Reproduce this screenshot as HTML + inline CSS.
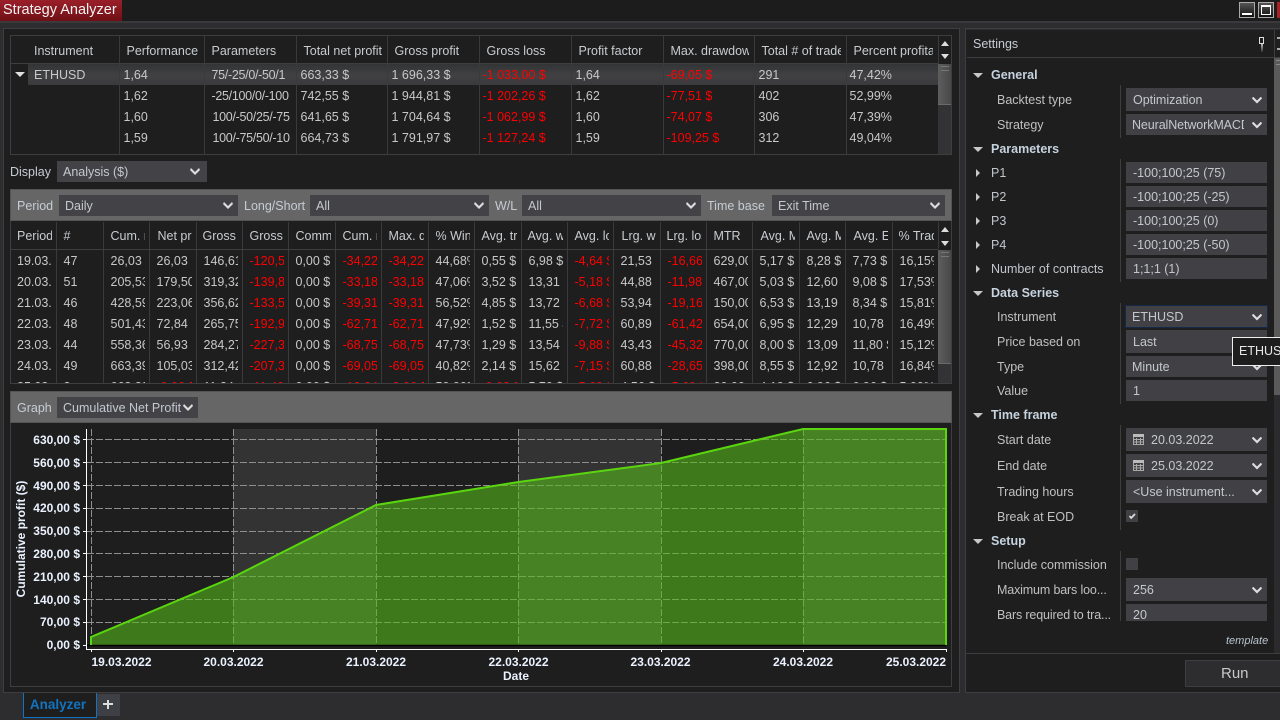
<!DOCTYPE html>
<html><head><meta charset="utf-8"><title>Strategy Analyzer</title>
<style>
*{box-sizing:border-box}
html,body{margin:0;padding:0;width:1280px;height:720px;overflow:hidden;background:#2d2d30;font-family:"Liberation Sans",sans-serif;font-size:12.5px;color:#c8c8c8}
div,span,table{position:absolute}
td div,td span{position:static}
.t{white-space:nowrap;line-height:15px}
table{border-collapse:collapse;table-layout:fixed;border-spacing:0}
td{padding:0;height:21px;overflow:hidden}
td div{overflow:hidden;white-space:nowrap;height:21px;line-height:23px}
.r{color:#f00}
.sel{background:#434347;color:#c4c8d0;height:21px;line-height:23px;padding-left:6px;white-space:nowrap}
.sel:after,.ctl.dd:after{content:"";position:absolute;right:5px;top:7px;width:10px;height:7px;background:#ddd;clip-path:polygon(1px 0,5px 4px,9px 0,10px 2px,5px 7px,0 2px)}
.sel.d:after{right:7px}
.bar{left:10px;width:942px;height:32px;background:#666;border:1px solid #555}
.lbl{color:#c6ccd4;white-space:nowrap;line-height:15px;margin-top:1px}
.sec{left:991px;font-weight:bold;color:#c6d3df;white-space:nowrap;line-height:15px;margin-top:1px}
.lab{left:997px;color:#c0c0c0;white-space:nowrap;line-height:15px;margin-top:1px}
.par{left:991px;color:#c0c6cc;white-space:nowrap;line-height:15px;margin-top:1px}
.down{left:973px;width:0;height:0;border-left:5px solid transparent;border-right:5px solid transparent;border-top:5px solid #c8c8c8}
.rt{left:976px;width:0;height:0;border-top:4px solid transparent;border-bottom:4px solid transparent;border-left:4px solid #c8c8c8;margin-top:1px}
.ctl{left:1126px;width:141px;background:#404045;color:#c4c8ce;padding-left:6px;white-space:nowrap;line-height:23px;overflow:hidden}
.ctl.dd:after{top:calc(50% - 3px)}
.vs{left:1120px;width:1px;background:#3e3e3e}
.cal{position:absolute;left:7px;top:6px}
.h1 td div{height:28px;line-height:30px;padding-left:7px;color:#c8ccd0}
.h2 td div{height:27px;line-height:29px;padding-left:7px;margin-right:4px;color:#c8ccd0}
.bd td{border-right:1px solid #3a3a3c}
.ta td div{padding-left:4px}
.ta td:nth-child(1) div{padding-left:23px}
.ta td:nth-child(3) div{padding-left:7px;margin-right:5px;letter-spacing:-.3px}
.ta td:nth-child(6) div,.ta td:nth-child(8) div,.ta td:nth-child(10) div{padding-left:3px}
.tb td div{padding-left:7px;margin-right:4px}
.tb td:first-child div{padding-left:6px;margin-right:5px}
</style></head><body>

<div style="left:0;top:0;width:1280px;height:22px;background:#1c1c1c"></div>
<div style="left:0;top:21px;width:1280px;height:2px;background:#3a3a3c"></div>
<div class="t" style="left:0;top:0;width:122px;height:21px;background:linear-gradient(#9a1f29,#701016);color:#f2f2f2;font-size:14.5px;line-height:20px;padding-left:3px">Strategy Analyzer</div>
<div style="left:1239px;top:2px;width:16px;height:16px;border:1px solid #aaa;background:linear-gradient(#555,#111)"><div style="left:2px;top:10px;width:10px;height:2px;background:#fff"></div></div>
<div style="left:1258px;top:2px;width:16px;height:16px;border:1px solid #aaa;background:linear-gradient(#555,#111)"><div style="left:2px;top:2px;width:10px;height:10px;border:1px solid #fff;border-top:2px solid #fff"></div></div>
<div style="left:1277px;top:2px;width:3px;height:16px;background:#a82028"></div>

<!-- main panel -->
<div style="left:3px;top:28px;width:957px;height:665px;background:#1e1e1e;border:1px solid #3e3e40"></div>

<!-- top table -->
<div style="left:10px;top:35px;width:942px;height:120px;border:1px solid #3e3e40"></div>
<div style="left:28px;top:64px;width:910px;height:21px;background:linear-gradient(#333436,#414143 55%,#3a3a3c)"></div>
<div style="left:11px;top:63px;width:927px;height:1px;background:#3e3e40"></div>
<table class="h1 bd" style="left:11px;top:36px;width:927px">
<colgroup><col style="width:108px"><col style="width:85px"><col style="width:92px"><col style="width:91px"><col style="width:92px"><col style="width:92px"><col style="width:92px"><col style="width:91px"><col style="width:92px"><col style="width:92px"></colgroup>
<tr style="height:28px"><td style="height:28px"><div style="padding-left:23px">Instrument</div></td><td style="height:28px"><div>Performance</div></td><td style="height:28px"><div>Parameters</div></td><td style="height:28px"><div>Total net profit</div></td><td style="height:28px"><div>Gross profit</div></td><td style="height:28px"><div>Gross loss</div></td><td style="height:28px"><div>Profit factor</div></td><td style="height:28px"><div style="margin-right:5px">Max. drawdown</div></td><td style="height:28px"><div style="margin-right:5px">Total # of trades</div></td><td style="height:28px"><div style="margin-right:5px">Percent profitable</div></td></tr>
</table>
<table class="ta bd" style="left:11px;top:64px;width:927px;height:90px">
<colgroup><col style="width:108px"><col style="width:85px"><col style="width:92px"><col style="width:91px"><col style="width:92px"><col style="width:92px"><col style="width:92px"><col style="width:91px"><col style="width:92px"><col style="width:92px"></colgroup>
<tr><td><div>ETHUSD</div></td><td><div>1,64</div></td><td><div>75/-25/0/-50/1&nbsp;&nbsp;&nbsp;</div></td><td><div>663,33 $</div></td><td><div>1 696,33 $</div></td><td><div class="r">-1 033,00 $</div></td><td><div>1,64</div></td><td><div class="r">-69,05 $</div></td><td><div>291</div></td><td><div>47,42%</div></td></tr>
<tr><td></td><td><div>1,62</div></td><td><div>-25/100/0/-100</div></td><td><div>742,55 $</div></td><td><div>1 944,81 $</div></td><td><div class="r">-1 202,26 $</div></td><td><div>1,62</div></td><td><div class="r">-77,51 $</div></td><td><div>402</div></td><td><div>52,99%</div></td></tr>
<tr><td></td><td><div>1,60</div></td><td><div style="padding-left:8px">100/-50/25/-75</div></td><td><div>641,65 $</div></td><td><div>1 704,64 $</div></td><td><div class="r">-1 062,99 $</div></td><td><div>1,60</div></td><td><div class="r">-74,07 $</div></td><td><div>306</div></td><td><div>47,39%</div></td></tr>
<tr><td></td><td><div>1,59</div></td><td><div style="padding-left:8px">100/-75/50/-10</div></td><td><div>664,73 $</div></td><td><div>1 791,97 $</div></td><td><div class="r">-1 127,24 $</div></td><td><div>1,59</div></td><td><div class="r">-109,25 $</div></td><td><div>312</div></td><td><div>49,04%</div></td></tr>
<tr style="height:6px"><td style="height:6px"></td><td style="height:6px"></td><td style="height:6px"></td><td style="height:6px"></td><td style="height:6px"></td><td style="height:6px"></td><td style="height:6px"></td><td style="height:6px"></td><td style="height:6px"></td><td style="height:6px"></td></tr>
</table>
<div style="left:15px;top:72px;width:0;height:0;border-left:5px solid transparent;border-right:5px solid transparent;border-top:5px solid #e0e0e0"></div>
<div style="left:938px;top:64px;width:13px;height:90px;background:#333335"></div>
<div style="left:938px;top:64px;width:13px;height:41px;background:linear-gradient(90deg,#5e5e5e,#484848);border-bottom:1px solid #6a6a6a"></div>
<div style="left:941px;top:66px;width:8px;height:5px;border-top:1px solid #777;border-bottom:1px solid #777"></div>
<div style="left:941px;top:41px;width:0;height:0;border-left:4px solid transparent;border-right:4px solid transparent;border-bottom:5px solid #ddd"></div>
<div style="left:941px;top:54px;width:0;height:0;border-left:4px solid transparent;border-right:4px solid transparent;border-top:5px solid #ddd"></div>

<!-- display -->
<div class="lbl" style="left:10px;top:164px">Display</div>
<div class="sel d" style="left:57px;top:161px;width:150px">Analysis ($)</div>

<!-- filter bar -->
<div class="bar" style="top:189px"></div>
<div class="lbl" style="left:17px;top:198px">Period</div>
<div class="sel" style="left:59px;top:195px;width:179px">Daily</div>
<div class="lbl" style="left:244px;top:198px">Long/Short</div>
<div class="sel" style="left:310px;top:195px;width:179px">All</div>
<div class="lbl" style="left:495px;top:198px">W/L</div>
<div class="sel" style="left:522px;top:195px;width:179px">All</div>
<div class="lbl" style="left:707px;top:198px">Time base</div>
<div class="sel" style="left:772px;top:195px;width:173px">Exit Time</div>

<!-- table 2 -->
<div style="left:10px;top:221px;width:942px;height:163px;border:1px solid #3e3e40;border-top:0"></div>
<div style="left:11px;top:249px;width:927px;height:1px;background:#3e3e40"></div>
<div style="left:11px;top:250px;overflow:hidden;width:927px;height:133px">
<table class="tb bd" style="left:0;top:0;width:927px">
<colgroup><col style="width:45px"><col style="width:47px"><col style="width:46px"><col style="width:47px"><col style="width:46px"><col style="width:46px"><col style="width:47px"><col style="width:46px"><col style="width:47px"><col style="width:46px"><col style="width:47px"><col style="width:46px"><col style="width:46px"><col style="width:47px"><col style="width:46px"><col style="width:46px"><col style="width:47px"><col style="width:46px"><col style="width:47px"><col style="width:46px"></colgroup>
<tr><td><div>19.03.2022</div></td><td><div>47</div></td><td><div>26,03</div></td><td><div>26,03</div></td><td><div>146,61 $</div></td><td><div class="r">-120,58 $</div></td><td><div>0,00 $</div></td><td><div class="r">-34,22 $</div></td><td><div class="r">-34,22 $</div></td><td><div>44,68%</div></td><td><div>0,55 $</div></td><td><div>6,98 $</div></td><td><div class="r">-4,64 $</div></td><td><div>21,53</div></td><td><div class="r">-16,66 $</div></td><td><div>629,00</div></td><td><div>5,17 $</div></td><td><div>8,28 $</div></td><td><div>7,73 $</div></td><td><div>16,15%</div></td></tr>
<tr><td><div>20.03.2022</div></td><td><div>51</div></td><td><div>205,53 $</div></td><td><div>179,50 $</div></td><td><div>319,32 $</div></td><td><div class="r">-139,82 $</div></td><td><div>0,00 $</div></td><td><div class="r">-33,18 $</div></td><td><div class="r">-33,18 $</div></td><td><div>47,06%</div></td><td><div>3,52 $</div></td><td><div>13,31</div></td><td><div class="r">-5,18 $</div></td><td><div>44,88</div></td><td><div class="r">-11,98 $</div></td><td><div>467,00</div></td><td><div>5,03 $</div></td><td><div>12,60</div></td><td><div>9,08 $</div></td><td><div>17,53%</div></td></tr>
<tr><td><div>21.03.2022</div></td><td><div>46</div></td><td><div>428,59 $</div></td><td><div>223,06 $</div></td><td><div>356,62 $</div></td><td><div class="r">-133,56 $</div></td><td><div>0,00 $</div></td><td><div class="r">-39,31 $</div></td><td><div class="r">-39,31 $</div></td><td><div>56,52%</div></td><td><div>4,85 $</div></td><td><div>13,72</div></td><td><div class="r">-6,68 $</div></td><td><div>53,94</div></td><td><div class="r">-19,16 $</div></td><td><div>150,00</div></td><td><div>6,53 $</div></td><td><div>13,19</div></td><td><div>8,34 $</div></td><td><div>15,81%</div></td></tr>
<tr><td><div>22.03.2022</div></td><td><div>48</div></td><td><div>501,43 $</div></td><td><div>72,84</div></td><td><div>265,75 $</div></td><td><div class="r">-192,91 $</div></td><td><div>0,00 $</div></td><td><div class="r">-62,71 $</div></td><td><div class="r">-62,71 $</div></td><td><div>47,92%</div></td><td><div>1,52 $</div></td><td><div>11,55 $</div></td><td><div class="r">-7,72 $</div></td><td><div>60,89</div></td><td><div class="r">-61,42 $</div></td><td><div>654,00</div></td><td><div>6,95 $</div></td><td><div>12,29</div></td><td><div>10,78</div></td><td><div>16,49%</div></td></tr>
<tr><td><div>23.03.2022</div></td><td><div>44</div></td><td><div>558,36 $</div></td><td><div>56,93</div></td><td><div>284,27 $</div></td><td><div class="r">-227,34 $</div></td><td><div>0,00 $</div></td><td><div class="r">-68,75 $</div></td><td><div class="r">-68,75 $</div></td><td><div>47,73%</div></td><td><div>1,29 $</div></td><td><div>13,54</div></td><td><div class="r">-9,88 $</div></td><td><div>43,43</div></td><td><div class="r">-45,32 $</div></td><td><div>770,00</div></td><td><div>8,00 $</div></td><td><div>13,09</div></td><td><div>11,80 $</div></td><td><div>15,12%</div></td></tr>
<tr><td><div>24.03.2022</div></td><td><div>49</div></td><td><div>663,39 $</div></td><td><div>105,03 $</div></td><td><div>312,42 $</div></td><td><div class="r">-207,39 $</div></td><td><div>0,00 $</div></td><td><div class="r">-69,05 $</div></td><td><div class="r">-69,05 $</div></td><td><div>40,82%</div></td><td><div>2,14 $</div></td><td><div>15,62</div></td><td><div class="r">-7,15 $</div></td><td><div>60,88</div></td><td><div class="r">-28,65 $</div></td><td><div>398,00</div></td><td><div>8,55 $</div></td><td><div>12,92</div></td><td><div>10,78</div></td><td><div>16,84%</div></td></tr>
<tr><td><div>25.03.2022</div></td><td><div>2</div></td><td><div>663,33 $</div></td><td><div class="r">-0,06 $</div></td><td><div>11,34 $</div></td><td><div class="r">-11,40 $</div></td><td><div>0,00 $</div></td><td><div class="r">-10,04 $</div></td><td><div class="r">-0,06 $</div></td><td><div>50,00%</div></td><td><div class="r">-0,03 $</div></td><td><div>5,70 $</div></td><td><div class="r">-5,69 $</div></td><td><div>4,56 $</div></td><td><div class="r">-5,69 $</div></td><td><div>20,00</div></td><td><div>4,19 $</div></td><td><div>6,96 $</div></td><td><div>6,96 $</div></td><td><div>5,00%</div></td></tr>
</table></div>
<table class="h2 bd" style="left:11px;top:222px;width:927px">
<colgroup><col style="width:45px"><col style="width:47px"><col style="width:46px"><col style="width:47px"><col style="width:46px"><col style="width:46px"><col style="width:47px"><col style="width:46px"><col style="width:47px"><col style="width:46px"><col style="width:47px"><col style="width:46px"><col style="width:46px"><col style="width:47px"><col style="width:46px"><col style="width:46px"><col style="width:47px"><col style="width:46px"><col style="width:47px"><col style="width:46px"></colgroup>
<tr><td style="height:27px"><div style="padding-left:6px">Period</div></td><td style="height:27px"><div>#</div></td><td style="height:27px"><div>Cum. net</div></td><td style="height:27px"><div style="padding-left:8px">Net profit</div></td><td style="height:27px"><div style="padding-left:6px">Gross profit</div></td><td style="height:27px"><div>Gross loss</div></td><td style="height:27px"><div>Commission</div></td><td style="height:27px"><div>Cum. max</div></td><td style="height:27px"><div>Max. drawdown</div></td><td style="height:27px"><div>% Win</div></td><td style="height:27px"><div>Avg. trade</div></td><td style="height:27px"><div style="padding-left:6px">Avg. win</div></td><td style="height:27px"><div>Avg. loss</div></td><td style="height:27px"><div style="padding-left:8px">Lrg. win</div></td><td style="height:27px"><div style="padding-left:6px">Lrg. loss</div></td><td style="height:27px"><div>MTR</div></td><td style="height:27px"><div style="padding-left:8px">Avg. MAE</div></td><td style="height:27px"><div>Avg. MFE</div></td><td style="height:27px"><div style="padding-left:8px">Avg. ETD</div></td><td style="height:27px"><div style="padding-left:6px">% Traded</div></td></tr>
</table>
<div style="left:938px;top:250px;width:13px;height:133px;background:#333335"></div>
<div style="left:938px;top:250px;width:13px;height:114px;background:linear-gradient(90deg,#5e5e5e,#484848);border-bottom:1px solid #6a6a6a"></div>
<div style="left:941px;top:252px;width:8px;height:5px;border-top:1px solid #777;border-bottom:1px solid #777"></div>
<div style="left:941px;top:227px;width:0;height:0;border-left:4px solid transparent;border-right:4px solid transparent;border-bottom:5px solid #ddd"></div>
<div style="left:941px;top:241px;width:0;height:0;border-left:4px solid transparent;border-right:4px solid transparent;border-top:5px solid #ddd"></div>

<!-- graph bar -->
<div class="bar" style="top:391px"></div>
<div class="lbl" style="left:17px;top:400px">Graph</div>
<div class="sel" style="left:57px;top:397px;width:141px">Cumulative Net Profit</div>

<!-- chart -->
<div style="left:10px;top:423px;width:942px;height:264px;border:1px solid #3e3e40;border-top:0"></div>
<svg style="position:absolute;left:0;top:0" width="1280" height="720" xmlns="http://www.w3.org/2000/svg">
<rect x="233" y="429" width="143" height="216" fill="#333"/>
<rect x="518" y="429" width="143" height="216" fill="#333"/>
<rect x="803" y="429" width="143" height="216" fill="#333"/>
<g stroke="#8e8e8e" stroke-width="1" stroke-dasharray="7 2" fill="none">
<path d="M87 439.5H946M87 462.5H946M87 485.5H946M87 508.5H946M87 531.5H946M87 553.5H946M87 576.5H946M87 599.5H946M87 622.5H946"/>
<path d="M91.5 429V645M233.5 429V645M376.5 429V645M518.5 429V645M661.5 429V645M803.5 429V645"/>
</g>
<polygon points="91,637 233.5,577 376,505 518.5,482 661,463 803,429 946,429 946,645 91,645" fill="rgb(86,191,26)" fill-opacity=".57"/>
<path d="M86 645.5H946" stroke="#000" stroke-width="1.5"/>
<polyline points="91,645 91,637 233.5,577 376,505 518.5,482 661,463 803,429 946,429 946,645" fill="none" stroke="#5ad510" stroke-width="2"/>
<path d="M86.5 429V649M86 649.5H947" stroke="#fff" stroke-width="1" fill="none"/>
<path d="M83 439.5H86M83 462.5H86M83 485.5H86M83 508.5H86M83 531.5H86M83 553.5H86M83 576.5H86M83 599.5H86M83 622.5H86M83 645.5H86M91.5 650V652M233.5 650V652M376.5 650V652M518.5 650V652M661.5 650V652M803.5 650V652M946.5 650V652" stroke="#fff" fill="none"/>
<g font-family="Liberation Sans" font-weight="bold" font-size="12" fill="#eaf2ff" text-anchor="end">
<text x="80" y="444">630,00 $</text><text x="80" y="467">560,00 $</text><text x="80" y="490">490,00 $</text><text x="80" y="512">420,00 $</text><text x="80" y="535">350,00 $</text><text x="80" y="558">280,00 $</text><text x="80" y="581">210,00 $</text><text x="80" y="604">140,00 $</text><text x="80" y="626">70,00 $</text><text x="80" y="649">0,00 $</text>
</g>
<g font-family="Liberation Sans" font-weight="bold" font-size="12" fill="#eaf2ff" text-anchor="middle">
<text x="121.5" y="666">19.03.2022</text><text x="233.5" y="666">20.03.2022</text><text x="376" y="666">21.03.2022</text><text x="518.5" y="666">22.03.2022</text><text x="660.5" y="666">23.03.2022</text><text x="803" y="666">24.03.2022</text><text x="916" y="666">25.03.2022</text><text x="516" y="680">Date</text>
<text transform="translate(25 539) rotate(-90)">Cumulative profit ($)</text>
</g>
</svg>

<!-- tabs -->
<div style="left:23px;top:693px;width:74px;height:25px;background:#1e1e1e;border:1px solid #1273c0;border-top:0;color:#1273c0;font-weight:bold;font-size:13.5px;line-height:23px;text-align:center;padding-right:4px">Analyzer</div>
<div style="left:97px;top:694px;width:23px;height:22px;background:#3f3f46"><div style="left:6px;top:9px;width:10px;height:2px;background:#ddd"></div><div style="left:10px;top:5.5px;width:2px;height:9px;background:#ddd"></div></div>

<!-- settings panel -->
<div style="left:965px;top:28px;width:315px;height:665px;background:#1e1e1e;border:1px solid #3e3e40;border-right:0"></div>
<div style="left:966px;top:29px;width:314px;height:1px;background:#2d2d30"></div>
<div style="left:967px;top:57px;width:313px;height:1px;background:#3e3e40"></div>
<div style="left:966px;top:653px;width:314px;height:1px;background:#3e3e40"></div>
<div style="left:1274px;top:30px;width:1px;height:28px;background:#3e3e40"></div>
<div style="left:1274px;top:58px;width:6px;height:595px;background:#2b2b2d"></div>
<div style="left:1274px;top:58px;width:6px;height:337px;background:#5a5a5a"></div>
<div style="left:1276px;top:60px;width:4px;height:5px;border-top:1px solid #888;border-bottom:1px solid #888"></div>
<div style="left:1277px;top:37px;width:3px;height:2px;background:#aaa"></div>
<div style="left:1277px;top:48px;width:3px;height:2px;background:#aaa"></div>
<div class="lbl" style="left:973px;top:36px">Settings</div>
<div style="left:1259px;top:37px;width:5px;height:7px;border:1px solid #ddd"></div>
<div style="left:1260.5px;top:44px;width:2px;height:8px;background:linear-gradient(#bbb,#333)"></div>

<div class="down" style="top:73px"></div><div class="sec" style="top:67px">General</div>
<div class="vs" style="top:85px;height:53px"></div>
<div class="lab" style="top:92px">Backtest type</div><div class="ctl dd" style="top:88px;height:23px;line-height:25px;padding-left:7px">Optimization</div>
<div class="lab" style="top:117px">Strategy</div><div class="ctl dd" style="top:114px;height:21px;padding-left:6px"><span style="display:block;position:static;width:112px;overflow:hidden;letter-spacing:-.1px">NeuralNetworkMACD</span></div>

<div class="down" style="top:147px"></div><div class="sec" style="top:141px">Parameters</div>
<div class="vs" style="top:159px;height:123px"></div>
<div class="rt" style="top:168px"></div><div class="par" style="top:165px">P1</div><div class="ctl" style="top:162px;height:21px;padding-left:7px">-100;100;25 (75)</div>
<div class="rt" style="top:192px"></div><div class="par" style="top:189px">P2</div><div class="ctl" style="top:186px;height:21px;padding-left:7px">-100;100;25 (-25)</div>
<div class="rt" style="top:216px"></div><div class="par" style="top:213px">P3</div><div class="ctl" style="top:210px;height:21px;padding-left:7px">-100;100;25 (0)</div>
<div class="rt" style="top:240px"></div><div class="par" style="top:237px">P4</div><div class="ctl" style="top:234px;height:21px;padding-left:7px">-100;100;25 (-50)</div>
<div class="rt" style="top:264px"></div><div class="par" style="top:261px">Number of contracts</div><div class="ctl" style="top:258px;height:21px;padding-left:7px">1;1;1 (1)</div>

<div class="down" style="top:291px"></div><div class="sec" style="top:285px">Data Series</div>
<div class="vs" style="top:303px;height:101px"></div>
<div class="lab" style="top:309px">Instrument</div><div class="ctl dd" style="top:306px;height:21px;box-shadow:0 0 0 1px #14284a;padding-left:6px">ETHUSD</div>
<div class="lab" style="top:334px">Price based on</div><div class="ctl dd" style="top:330px;height:23px;line-height:25px;padding-left:7px">Last</div>
<div class="lab" style="top:359px">Type</div><div class="ctl dd" style="top:356px;height:21px;padding-left:6px">Minute</div>
<div class="lab" style="top:383px">Value</div><div class="ctl" style="top:380px;height:21px;padding-left:7px">1</div>

<div class="down" style="top:413px"></div><div class="sec" style="top:407px">Time frame</div>
<div class="vs" style="top:425px;height:105px"></div>
<div class="lab" style="top:432px">Start date</div><div class="ctl dd" style="top:428px;height:23px;line-height:25px;padding-left:25px"><svg class="cal" width="11" height="11"><path d="M0 0h11v3H0z" fill="#bbb"/><path d="M.5 3v7.5h10V3M0 5.5h11M0 8h11M3.5 4v6M7.5 4v6" fill="none" stroke="#aaa"/></svg>20.03.2022</div>
<div class="lab" style="top:458px">End date</div><div class="ctl dd" style="top:454px;height:23px;line-height:25px;padding-left:25px"><svg class="cal" width="11" height="11"><path d="M0 0h11v3H0z" fill="#bbb"/><path d="M.5 3v7.5h10V3M0 5.5h11M0 8h11M3.5 4v6M7.5 4v6" fill="none" stroke="#aaa"/></svg>25.03.2022</div>
<div class="lab" style="top:484px">Trading hours</div><div class="ctl dd" style="top:480px;height:23px;line-height:25px;padding-left:7px">&lt;Use instrument...</div>
<div class="lab" style="top:509px">Break at EOD</div><div style="left:1126px;top:510px;width:12px;height:12px;background:#404045"></div>
<svg style="position:absolute;left:1126px;top:510px" width="12" height="12"><path d="M3.5 6L5.2 8L9 4" fill="none" stroke="#e0e0e0" stroke-width="1.7"/></svg>

<div class="down" style="top:539px"></div><div class="sec" style="top:533px">Setup</div>
<div class="vs" style="top:551px;height:70px"></div>
<div class="lab" style="top:557px">Include commission</div><div style="left:1126px;top:558px;width:12px;height:12px;background:#404045"></div>
<div class="lab" style="top:582px;letter-spacing:-.15px">Maximum bars loo...</div><div class="ctl dd" style="top:578px;height:23px;line-height:25px;padding-left:7px">256</div>
<div class="lab" style="top:607px;letter-spacing:-.15px">Bars required to tra...</div><div class="ctl" style="top:604px;height:17px;padding-left:7px">20</div>

<div class="t" style="left:1226px;top:634px;font-style:italic;font-size:11px;color:#b8c4cf">template</div>
<div style="left:1185px;top:660px;width:95px;height:27px;background:#2d2d30;border:1px solid #3e3e40;border-right:0;color:#c8c8c8;font-size:15px;line-height:25px;padding-left:35px">Run</div>

<!-- tooltip -->
<div style="left:1232px;top:337px;width:48px;height:29px;background:#1e1e1e;border:1px solid #eee;border-right:0;color:#e8e8e8;line-height:27px;padding-left:6px;white-space:nowrap;overflow:hidden">ETHUSD</div>

</body></html>
